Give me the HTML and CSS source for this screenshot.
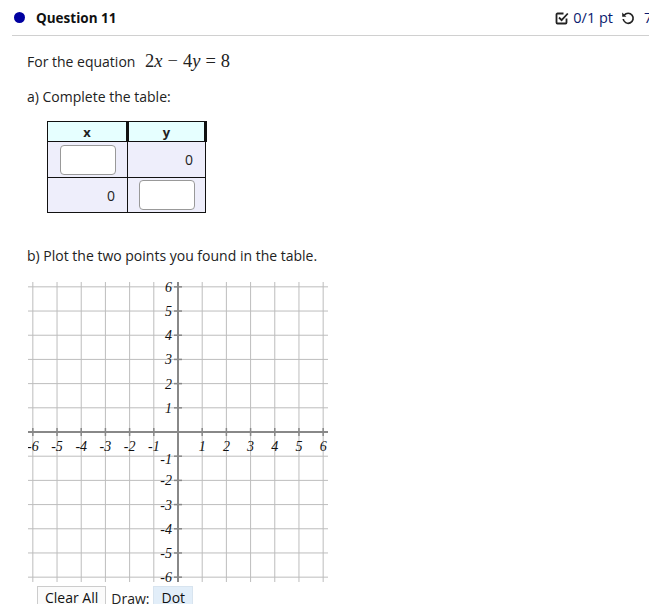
FILE: index.html
```html
<!DOCTYPE html>
<html>
<head>
<meta charset="utf-8">
<link rel="stylesheet" href="styles.css">
</head>
<body>
<div class="header">
  <div class="qtitle"><span class="dot"></span><span class="qname">Question 11</span></div>
  <div class="score">
    <svg class="ico" width="14" height="14" viewBox="0 0 14 14"><path d="M11.5 7.5v4a1 1 0 0 1-1 1h-8a1 1 0 0 1-1-1v-8a1 1 0 0 1 1-1h6" fill="none" stroke="#222" stroke-width="1.8"/><path d="M4 6.5l2.6 2.6L12.8 2.5" fill="none" stroke="#222" stroke-width="1.8"/></svg>
    <span class="pts">0/1 pt</span>
    <svg class="ico redo" width="14" height="14" viewBox="0 0 14 14"><path d="M3.2 4.2A5 5 0 1 1 2.2 8" fill="none" stroke="#222" stroke-width="1.7"/><path d="M1.2 1.5v4.2h4.2z" fill="#222"/></svg>
    <span class="tries">7</span>
  </div>
</div>
<div class="content">
  <p class="line1">For the equation <span class="math"><span class="mn">2</span><span class="mi">x</span><span class="mo">−</span><span class="mn">4</span><span class="mi">y</span><span class="mo">=</span><span class="mn">8</span></span></p>
  <p class="line2">a) Complete the table:</p>
  <table class="tbl">
    <colgroup><col class="w1"><col class="w2"></colgroup>
    <tr class="hrow"><th class="c1">x</th><th class="c2">y</th></tr>
    <tr class="r1"><td class="cc"><span class="inp"></span></td><td class="num">0</td></tr>
    <tr class="r2"><td class="num">0</td><td class="cc"><span class="inp"></span></td></tr>
  </table>
  <p class="line3">b) Plot the two points you found in the table.</p>
  <div class="graph">
    <svg width="300" height="300" viewBox="0 0 300 300" id="g"></svg>
  </div>
  <div class="controls">
    <span class="btn">Clear All</span>
    <span class="draw">Draw:</span>
    <span class="btn sel">Dot</span>
  </div>
</div>
<script src="graph.js"></script>
</body>
</html>
```
FILE: graph.js
```js
(function(){
  var svg = document.getElementById('g');
  var ns = 'http://www.w3.org/2000/svg';
  var s = 300/12.4, c = 150;
  function el(n, a, t){ var e=document.createElementNS(ns,n); for(var k in a) e.setAttribute(k,a[k]); if(t!==undefined) e.textContent=t; svg.appendChild(e); return e; }
  for (var k=-6;k<=6;k++){
    var p = c + k*s;
    el('line',{x1:p,y1:0,x2:p,y2:300,class:'grid'});
    el('line',{x1:0,y1:p,x2:300,y2:p,class:'grid'});
  }
  el('line',{x1:0,y1:c,x2:300,y2:c,class:'axis'});
  el('line',{x1:c,y1:0,x2:c,y2:300,class:'axis'});
  for (var k=-6;k<=6;k++){
    if(k===0) continue;
    var p = c + k*s;
    el('line',{x1:p,y1:c-4,x2:p,y2:c+4,class:'tick'});
    el('line',{x1:c-4,y1:p,x2:c+4,y2:p,class:'tick'});
    el('text',{x:p,y:c+19,'text-anchor':'middle',class:'lbl'}, String(k));
    var yv = -k;
    var dy = (yv===-1)?8:5;
    el('text',{x:c-6,y:p+dy,'text-anchor':'end',class:'lbl'}, String(yv));
  }
})();
```
FILE: styles.css
```css
body{margin:0;font-family:"Open Sans","Liberation Sans",sans-serif;font-size:14px;color:#222;background:#fff;}
.header{display:flex;justify-content:space-between;align-items:center;height:35px;margin-left:12px;border-bottom:1px solid #d0d0d0;}
.qtitle{display:flex;align-items:center;}
.dot{width:11px;height:11px;border-radius:50%;background:#0000a0;display:inline-block;margin-left:2px;margin-right:11px;}
.qname{font-weight:bold;font-size:13.5px;color:#111;}
.score{display:flex;align-items:center;margin-right:-2px;font-size:14.5px;}
.ico{display:block;}
.pts{color:#0a1a6e;margin-left:4px;margin-right:8px;}
.tries{color:#0a1a6e;margin-left:9px;width:7px;overflow:hidden;}
.content{padding-left:27px;}
p{margin:0;}
.line1{padding-top:14px;height:22px;line-height:22px;}
.math{font-family:"Liberation Serif",serif;font-size:18.5px;margin-left:6px;}
.mi{font-style:italic;}
.mo{margin:0 5px;}
.line2{margin-top:14px;line-height:22px;}
.tbl{margin-top:13px;margin-left:20px;border-collapse:collapse;table-layout:fixed;width:158px;}
.w1{width:80px;}
.w2{width:78px;}
.tbl th,.tbl td{border:1px solid #111;padding:0;box-sizing:border-box;}
.tbl th{background:#e6ffff;height:20px;font-size:13px;font-weight:bold;text-align:center;line-height:18px;}
.tbl th.c1{border-right:3px solid #111;}
.tbl th.c2{border-right:3px solid #111;}
.tbl td{background:#eeeefb;}
.r1 td{height:36px;}
.r2 td{height:35px;}
.tbl td.num{text-align:right;padding-right:12px;}
.tbl td.cc{text-align:center;}
.inp{display:inline-block;width:54px;height:28px;border:1px solid #999;border-radius:4px;background:#fff;vertical-align:middle;}
.line3{margin-top:32px;line-height:22px;}
.graph{margin-top:15px;margin-left:1px;height:300px;}
.graph svg{display:block;}
.grid{stroke:#bdbdbd;stroke-width:1;}
.axis{stroke:#888;stroke-width:2;}
.tick{stroke:#888;stroke-width:1.5;}
.lbl{font-family:"Liberation Serif",serif;font-style:italic;font-size:14px;fill:#111;}
.controls{display:flex;align-items:center;margin-top:4px;margin-left:10px;}
.btn{display:inline-block;border:1px solid #ccc;background:#fbfbfb;padding:1px 7px;line-height:20px;color:#111;}
.btn.sel{background:#e2eef9;border-color:#d8e4ef;}
.draw{margin:0 4px 0 5px;}
```
